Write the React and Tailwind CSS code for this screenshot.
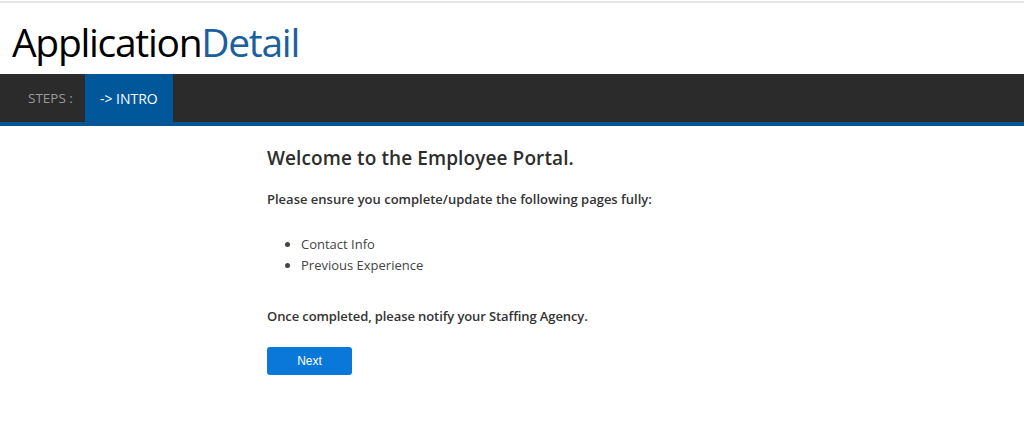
import React from 'react'

export default function App() {
  return (
    <div className="min-h-[445px] bg-white font-['Open_Sans','Noto_Sans',sans-serif] text-[#333]">
      <div className="h-[2px] bg-[#e6e6e6] mt-px" />
      <header className="h-[71px] flex items-center pl-3">
        <h1 className="text-[39px] leading-none tracking-[-1.3px] text-black mt-[5px]">
          Application<span className="text-[#1b5f9e]">Detail</span>
        </h1>
      </header>
      <nav className="h-[52px] bg-[#2b2b2b] border-b-4 border-[#0a5596] flex">
        <div className="pl-[28px] pr-[12px] flex items-center text-[13.5px] text-[#9a9a9a]">STEPS :</div>
        <div className="px-[15px] bg-[#00579a] flex items-center text-[14px] text-white">-&gt; INTRO</div>
      </nav>
      <main className="w-[490px] mx-auto pt-[20px]">
        <h2 className="text-[19px] font-semibold leading-[24px] tracking-[0.1px] text-[#2d2d2d]">Welcome to the Employee Portal.</h2>
        <p className="mt-[20px] text-[13px] font-semibold leading-[18px]">Please ensure you complete/update the following pages fully:</p>
        <ul className="mt-[26px] pl-[34px] list-disc text-[13px] leading-[21px] text-[#444]">
          <li>Contact Info</li>
          <li>Previous Experience</li>
        </ul>
        <p className="mt-[31px] text-[13px] font-semibold leading-[18px] tracking-[-0.1px]">Once completed, please notify your Staffing Agency.</p>
        <button className="mt-[22px] w-[85px] h-[28px] rounded-[3px] bg-[#0a78d8] text-white text-[12px] font-['Liberation_Sans',sans-serif]">
          Next
        </button>
      </main>
    </div>
  )
}
